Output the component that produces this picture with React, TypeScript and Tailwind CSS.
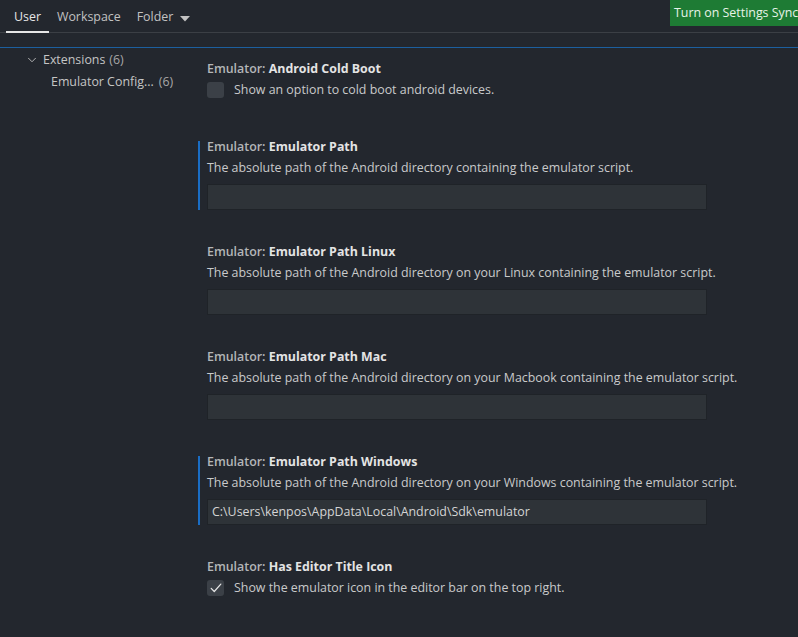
import { ChevronDown } from "lucide-react";

type Setting = {
  name: string;
  desc: string;
  kind: "check" | "text";
  value?: string;
  checked?: boolean;
  focused?: boolean;
};

const settings: Setting[] = [
  {
    name: "Android Cold Boot",
    desc: "Show an option to cold boot android devices.",
    kind: "check",
    checked: false,
  },
  {
    name: "Emulator Path",
    desc: "The absolute path of the Android directory containing the emulator script.",
    kind: "text",
    focused: true,
  },
  {
    name: "Emulator Path Linux",
    desc: "The absolute path of the Android directory on your Linux containing the emulator script.",
    kind: "text",
  },
  {
    name: "Emulator Path Mac",
    desc: "The absolute path of the Android directory on your Macbook containing the emulator script.",
    kind: "text",
  },
  {
    name: "Emulator Path Windows",
    desc: "The absolute path of the Android directory on your Windows containing the emulator script.",
    kind: "text",
    value: "C:\\Users\\kenpos\\AppData\\Local\\Android\\Sdk\\emulator",
    focused: true,
  },
  {
    name: "Has Editor Title Icon",
    desc: "Show the emulator icon in the editor bar on the top right.",
    kind: "check",
    checked: true,
  },
];

function SettingItem({ s }: { s: Setting }) {
  return (
    <div
      className={`border-l-2 pl-[7px] ${
        s.focused ? "border-[#1a6dc4]" : "border-transparent"
      }`}
    >
      <div className="leading-[12px] text-[12.4px]">
        <span className="font-semibold text-[#b4b6b8]">Emulator: </span>
        <span className="font-bold text-[#e4e4e4]">{s.name}</span>
      </div>
      {s.kind === "check" ? (
        <div className="flex items-center mt-[7px] h-[16px]">
          <div className="w-[17px] h-[16px] rounded-[3px] bg-[#3b4047] flex items-center justify-center">
            {s.checked && (
              <svg viewBox="0 0 16 16" className="w-[14px] h-[14px]" fill="none">
                <path
                  d="M2.5 8.5l3.5 3.5 7.5-8.5"
                  stroke="#e6e6e6"
                  strokeWidth="1.4"
                  strokeLinecap="round"
                  strokeLinejoin="round"
                />
              </svg>
            )}
          </div>
          <span className="ml-[10px] text-[12.4px] text-[#c9cacb] leading-[18px]">{s.desc}</span>
        </div>
      ) : (
        <>
          <div className="mt-[6px] text-[12.4px] text-[#c9cacb] leading-[18px]">{s.desc}</div>
          <div className="mt-[7px] w-[500px] h-[26px] bg-[#2e3338] border border-[#1f2328] flex items-center pl-[4px] text-[12.4px] text-[#d4d4d4]">
            {s.value}
          </div>
        </>
      )}
    </div>
  );
}

export default function App() {
  return (
    <div
      className="w-[798px] h-[637px] overflow-hidden bg-[#23272e] text-[#cccccc]"
      style={{ fontFamily: '"Segoe UI", "Open Sans", "Noto Sans", sans-serif' }}
    >
      {/* Header */}
      <div className="h-[33px] flex items-stretch border-b border-[#3b3f45]">
        <div className="flex items-stretch pl-[6px] text-[12.4px] pt-[3px]">
          <div className="px-[8px] flex items-center text-[#e6e6e6] border-b-2 border-[#e6e6e6] mb-[-1px]">
            User
          </div>
          <div className="px-[8px] flex items-center text-[#c2c2c2]">Workspace</div>
          <div className="px-[8px] flex items-center text-[#c2c2c2] gap-[7px]">
            Folder
            <svg viewBox="0 0 10 6" className="w-[10px] h-[6px] mt-[2px]">
              <path d="M0 0h10L5 5.5z" fill="#c2c2c2" />
            </svg>
          </div>
        </div>
        <div className="ml-auto h-[26px] bg-[#1e7b34] pl-[4px] text-[12.4px] text-[#e8f3e8] flex items-center whitespace-nowrap w-[128px] overflow-hidden">
          Turn on Settings Sync
        </div>
      </div>
      <div className="h-[14px]" />
      <div className="h-px bg-[#1c5f9f]" />

      {/* Body */}
      <div className="flex">
        <div className="w-[198px] shrink-0 pt-[1px] text-[12.4px]">
          <div className="flex items-center h-[22px] pl-[25px]">
            <ChevronDown className="w-[14px] h-[14px] text-[#c5c5c5]" strokeWidth={1.5} />
            <span className="ml-[4px] text-[#c5c5c5]">Extensions</span>
            <span className="ml-[4px] text-[#a8a8a8]">(6)</span>
          </div>
          <div className="flex items-center h-[22px] pl-[51px]">
            <span className="text-[#c5c5c5]">Emulator Config...</span>
            <span className="ml-[5px] text-[#a8a8a8]">(6)</span>
          </div>
        </div>
        <div className="flex flex-col pt-[15px]">
          <div className="mb-[43px]">
            <SettingItem s={settings[0]} />
          </div>
          <div className="flex flex-col gap-[36px]">
            {settings.slice(1).map((s) => (
              <SettingItem key={s.name} s={s} />
            ))}
          </div>
        </div>
      </div>
    </div>
  );
}
